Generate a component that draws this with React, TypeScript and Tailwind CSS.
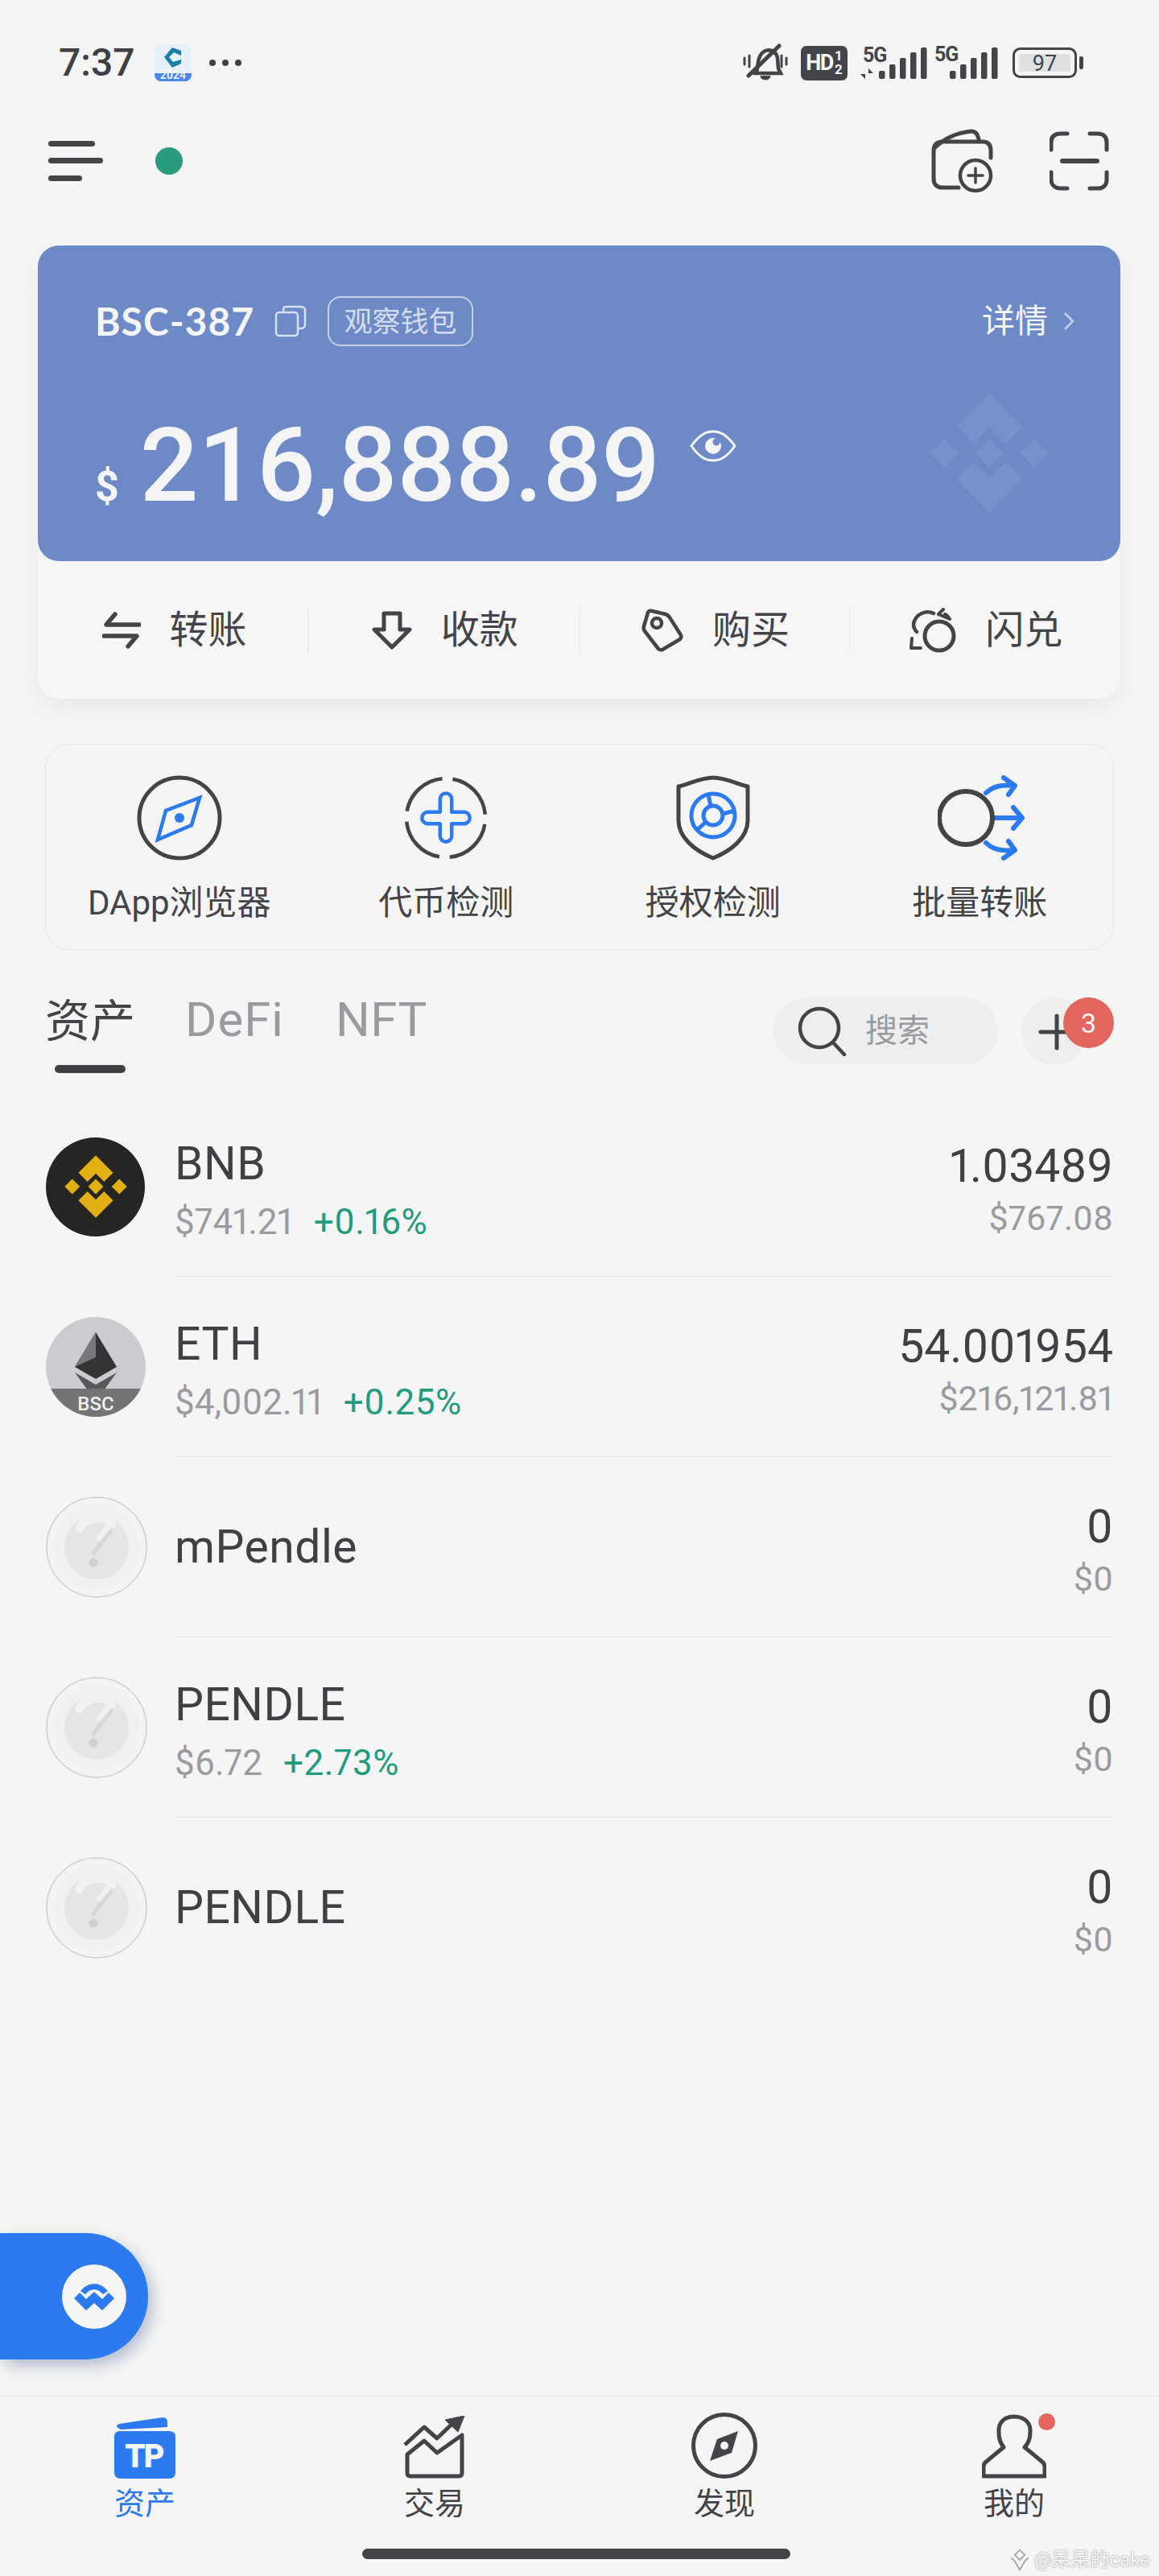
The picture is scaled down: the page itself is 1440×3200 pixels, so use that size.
import React from "react";

const DARK = "#434447";
const BLUE = "#2b7af0";

function Bn({ size, fill }: { size: number; fill: string }) {
  return (
    <svg width={size} height={size} viewBox="0 0 100 100">
      <g fill={fill}>
        <path d="M50 5 L75 30 L62 43 L50 31 L38 43 L25 30 Z" />
        <path d="M50 95 L75 70 L62 57 L50 69 L38 57 L25 70 Z" />
        <path d="M50 39 L61 50 L50 61 L39 50 Z" />
        <path d="M16 39 L27 50 L16 61 L5 50 Z" />
        <path d="M84 39 L95 50 L84 61 L73 50 Z" />
      </g>
    </svg>
  );
}

function SignalBars({ x0 }: { x0: number }) {
  const xs = [0, 13, 26, 39, 52];
  const hs = [10, 18, 26, 33, 39];
  return (
    <g fill={DARK}>
      {xs.map((x, i) => (
        <rect key={i} x={x0 + x} y={39 - hs[i] + 3} width="7.5" height={hs[i]} rx="2" />
      ))}
    </g>
  );
}

function StatusBar() {
  return (
    <div className="h-[156px] flex items-center justify-between pl-[73px] pr-[94px]">
      <div className="flex items-center">
        <span className="text-[48px] leading-none text-[#3f4043] font-['Roboto',sans-serif] font-medium w-[119px]">7:37</span>
        <svg width="46" height="46" viewBox="0 0 46 46">
          <rect width="46" height="46" rx="8" fill="#e6f0fa" />
          <path d="M0 36h46v2a8 8 0 0 1-8 8H8a8 8 0 0 1-8-8z" fill="#4b88ea" />
          <path d="M33 8 L22 4 L12 16 L22 29 L33 24 L33 19 L23 22 L18 16 L24 10 L33 14Z" fill="#1b7fa8" />
          <text x="23" y="43" textAnchor="middle" fontSize="14" fill="#fff" fontFamily="Roboto" fontWeight="500">2024</text>
        </svg>
        <div className="flex gap-[8px] ml-[22px]">
          <span className="w-[8px] h-[8px] rounded-full bg-[#3f4043]" />
          <span className="w-[8px] h-[8px] rounded-full bg-[#3f4043]" />
          <span className="w-[8px] h-[8px] rounded-full bg-[#3f4043]" />
        </div>
      </div>
      <div className="flex items-center">
        <svg width="56" height="48" viewBox="0 0 56 48" fill="none" stroke={DARK} strokeLinecap="round">
          <path d="M17 36 C19 30 17 14 28 9 C36 6 42 12 43 18 L44 31 L47 37 H14" strokeWidth="4.5" />
          <path d="M22 41 a6 4 0 0 0 12 0z" fill={DARK} strokeWidth="1" />
          <path d="M7 40 L45 3" strokeWidth="5" />
          <path d="M2 18v8M8 15v14M48 15v14M54 18v8" strokeWidth="3" />
        </svg>
        <div className="ml-[16px] w-[58px] h-[43px] rounded-[7px] bg-[#434447] flex items-center justify-center text-[#f5f5f5] font-['Roboto',sans-serif] font-bold leading-none">
          <span className="text-[27px] tracking-[-1.5px]">HD</span>
          <span className="flex flex-col text-[17px] leading-[17px] ml-[2px]">
            <span>1</span>
            <span>2</span>
          </span>
        </div>
        <svg width="172" height="44" viewBox="0 0 172 44" className="ml-[15px] overflow-visible">
          <text x="4" y="21" fontSize="25" fontWeight="700" fill={DARK} fontFamily="Roboto" letterSpacing="-1">5G</text>
          <path d="M7 29v13l-6-6h6M11 42V29l6 6h-6" fill={DARK} />
          <SignalBars x0={24} />
          <text x="93" y="20" fontSize="25" fontWeight="700" fill={DARK} fontFamily="Roboto" letterSpacing="-1">5G</text>
          <SignalBars x0={112} />
        </svg>
        <svg width="88" height="38" viewBox="0 0 88 38" className="ml-[18px]">
          <rect x="1.5" y="1.5" width="77" height="35" rx="8" fill="none" stroke={DARK} strokeWidth="3" />
          <rect x="8" y="8" width="64" height="22" rx="3" fill="#dfe0e2" />
          <text x="40" y="29" textAnchor="middle" fontSize="27" fill={DARK} fontFamily="Roboto">97</text>
          <rect x="83" y="11" width="5" height="16" rx="2" fill={DARK} />
        </svg>
      </div>
    </div>
  );
}

function Header() {
  return (
    <div className="h-[88px] mb-[61px] flex items-center justify-between pl-[60px] pr-[62px]">
      <div className="flex items-center">
        <svg width="68" height="50" viewBox="0 0 68 50" fill={DARK}>
          <rect x="0" y="0" width="58" height="7" rx="3.5" />
          <rect x="0" y="21" width="68" height="7" rx="3.5" />
          <rect x="0" y="43" width="42" height="7" rx="3.5" />
        </svg>
        <span className="ml-[65px] w-[34px] h-[34px] rounded-full bg-[#2a9c7e]" />
      </div>
      <div className="flex items-center">
        <svg width="80" height="80" viewBox="0 0 80 80" fill="none" stroke={DARK} strokeWidth="5" strokeLinecap="round">
          <path d="M4 24 C14 14 30 5 50 3 C56 3 58 8 59 13" />
          <path d="M34 73 H14 C7 73 3 69 3 62 V27 C3 20 7 16 14 16 H64 C71 16 74 20 74 27 V36" />
          <circle cx="55" cy="58" r="19" strokeWidth="4.5" />
          <path d="M55 49v18M46 58h18" strokeWidth="3.5" />
        </svg>
        <svg width="74" height="74" viewBox="0 0 74 74" fill="none" stroke={DARK} strokeWidth="5" strokeLinecap="round" className="ml-[67px]">
          <path d="M2 23 V14 C2 6 7 3 14 3 H22" />
          <path d="M50 3 H60 C67 3 71 7 71 14 V23" />
          <path d="M2 51 V60 C2 67 7 71 14 71 H22" />
          <path d="M50 71 H60 C67 71 71 67 71 60 V51" />
          <path d="M16 37 H59" strokeWidth="6" />
        </svg>
      </div>
    </div>
  );
}

function ActionIcon({ kind }: { kind: string }) {
  if (kind === "transfer")
    return (
      <svg width="48" height="46" viewBox="0 0 48 46" fill="none" stroke={DARK} strokeLinecap="round" strokeLinejoin="round">
        <path d="M16 3 L5 16 H46" strokeWidth="5.5" />
        <path d="M32 43 L43 30 H2" strokeWidth="5.5" />
      </svg>
    );
  if (kind === "receive")
    return (
      <svg width="50" height="48" viewBox="0 0 50 48" fill="none" stroke={DARK} strokeWidth="5" strokeLinecap="round" strokeLinejoin="round">
        <path d="M15 3 H35 V23 H47 L25 45 L3 23 H15 Z" />
      </svg>
    );
  if (kind === "buy")
    return (
      <svg width="52" height="54" viewBox="0 0 52 54" fill="none" stroke={DARK} strokeWidth="4.5" strokeLinecap="round" strokeLinejoin="round">
        <path d="M3 22 L8 5 Q9 2 13 3 L30 7 Q33 8 35 11 L49 33 Q50 36 48 38 L26 51 Q23 52 21 50 L4 28 Q2 25 3 22 Z" />
        <circle cx="19" cy="18" r="6" />
      </svg>
    );
  return (
    <svg width="58" height="56" viewBox="0 0 58 56" fill="none" stroke={DARK} strokeWidth="4.5" strokeLinecap="round" strokeLinejoin="round">
      <circle cx="37" cy="35" r="18" strokeWidth="5" />
      <path d="M30 7 C22 3 8 6 5 20 C5 25 8 29 9 30" />
      <path d="M42 2 L36 8 L50 14 C49 12 47 9 44 8" strokeWidth="4" />
      <path d="M2 50 H14 M3 38 L2 50" strokeWidth="4" />
    </svg>
  );
}

function Action({ kind, label }: { kind: string; label: string }) {
  return (
    <div className="flex items-center justify-center gap-[36px] pl-[3px]">
      <ActionIcon kind={kind} />
      <span className="text-[48px] leading-none text-[#434447]">{label}</span>
    </div>
  );
}

function WalletCard() {
  return (
    <div className="mx-[47px] w-[1345px] h-[563px] rounded-[26px] bg-[#f6f6f6] shadow-[0_14px_30px_rgba(0,0,0,0.05)] flex flex-col">
      <div className="relative h-[392px] rounded-[26px] bg-[#6d8ac6] pl-[71px] pr-[57px] pt-[63px] overflow-hidden">
        <div className="flex items-center justify-between h-[62px]">
          <div className="flex items-center">
            <span className="text-[48px] leading-none font-bold text-[#f5f5f5] font-['Lato',sans-serif] tracking-[1px] w-[223px]">BSC-387</span>
            <svg width="40" height="40" viewBox="0 0 40 40" fill="none" stroke="#d9e1f0" strokeWidth="2.5">
              <rect x="2" y="9" width="27" height="29" rx="4" />
              <path d="M11 8 V6 C11 3 13 2 15 2 H33 C36 2 38 4 38 6 V24 C38 27 36 29 33 29 H30" />
            </svg>
            <div className="ml-[26px] h-[62px] w-[181px] rounded-[16px] border-2 border-[#c5d1e8] flex items-center justify-center pt-[3px] text-[35px] leading-none text-[#d3ddee]">
              观察钱包
            </div>
          </div>
          <div className="flex items-center text-[41px] leading-none text-[#f5f5f5]">
            详情
            <svg width="14" height="24" viewBox="0 0 14 24" fill="none" stroke="#c5d1e8" strokeWidth="2.5" className="ml-[19px]">
              <path d="M2 2 L12 12 L2 22" />
            </svg>
          </div>
        </div>
        <div className="flex items-baseline mt-[88px] text-[#f5f5f5] font-['Roboto',sans-serif] font-medium">
          <span className="text-[52px] leading-none font-bold">$</span>
          <span className="ml-[26px] text-[128px] leading-[120px]">216,888.89</span>
          <svg width="58" height="40" viewBox="0 0 58 40" fill="none" stroke="#f5f5f5" strokeWidth="3" className="self-start ml-[37px] mt-[16px]">
            <path d="M2 20 C12 6 20 2 29 2 C38 2 46 6 56 20 C46 34 38 38 29 38 C20 38 12 34 2 20 Z" />
            <circle cx="29" cy="20" r="10" fill="#f5f5f5" stroke="none" />
            <circle cx="33" cy="15" r="4.5" fill="#6d8ac6" stroke="none" />
          </svg>
        </div>
        <div className="absolute left-[1100px] top-[175px]">
          <Bn size={165} fill="#7592cc" />
        </div>
      </div>
      <div className="flex-1 grid grid-cols-4 items-center">
        <div className="relative"><Action kind="transfer" label="转账" /><span className="absolute right-[-1px] top-[-2px] h-[56px] w-[2px] bg-[#ececec]" /></div>
        <div className="relative"><Action kind="receive" label="收款" /><span className="absolute right-[-1px] top-[-2px] h-[56px] w-[2px] bg-[#ececec]" /></div>
        <div className="relative"><Action kind="buy" label="购买" /><span className="absolute right-[-1px] top-[-2px] h-[56px] w-[2px] bg-[#ececec]" /></div>
        <div><Action kind="swap" label="闪兑" /></div>
      </div>
    </div>
  );
}

function FeatureIcon({ kind }: { kind: string }) {
  if (kind === "dapp")
    return (
      <svg width="106" height="106" viewBox="0 0 106 106" fill="none">
        <circle cx="53" cy="53" r="50" stroke={DARK} strokeWidth="5" />
        <path d="M78 28 L68 62 L26 80 L36 44 Z" stroke={BLUE} strokeWidth="4.5" strokeLinejoin="miter" />
        <circle cx="53" cy="53" r="6" fill={BLUE} />
      </svg>
    );
  if (kind === "token")
    return (
      <svg width="106" height="106" viewBox="0 0 106 106" fill="none">
        <circle cx="53" cy="53" r="49" stroke={DARK} strokeWidth="4.5" strokeDasharray="64 13" strokeDashoffset="-8" />
        <path d="M45 27 a8 8 0 0 1 16 0 V45 H78 a8 8 0 0 1 0 16 H61 V78 a8 8 0 0 1 -16 0 V61 H28 a8 8 0 0 1 0 -16 H45 Z" stroke={BLUE} strokeWidth="5" strokeLinejoin="round" transform="translate(53 53) scale(0.9) translate(-53 -53)" />
      </svg>
    );
  if (kind === "auth")
    return (
      <svg width="92" height="106" viewBox="0 0 92 106" fill="none">
        <path d="M3 14 C18 10 32 3 46 3 C60 3 74 10 89 14 V56 C89 78 68 94 46 103 C24 94 3 78 3 56 Z" stroke={DARK} strokeWidth="5" strokeLinejoin="round" />
        <circle cx="46" cy="50" r="27" stroke={BLUE} strokeWidth="5" />
        <circle cx="46" cy="50" r="12" stroke={BLUE} strokeWidth="5" />
        <path d="M40 24 L43 38M58 48 L73 44M37 58 L26 68" stroke={BLUE} strokeWidth="5" />
      </svg>
    );
  return (
    <svg width="110" height="106" viewBox="0 0 110 106" fill="none" strokeLinecap="round" strokeLinejoin="round" className="ml-[6px]">
      <path d="M60 22 C68 14 78 11 94 13M82 3 L96 13 L88 24" stroke={BLUE} strokeWidth="6" />
      <path d="M68 53 H104M94 40 L105 53 L94 66" stroke={BLUE} strokeWidth="6" />
      <path d="M60 84 C68 92 78 95 94 93M82 103 L96 93 L88 82" stroke={BLUE} strokeWidth="6" />
      <circle cx="35" cy="53" r="33" stroke={DARK} strokeWidth="6" fill="#f5f5f5" />
    </svg>
  );
}

function Feature({ kind, label }: { kind: string; label: string }) {
  return (
    <div className="flex flex-col items-center">
      <div className="h-[106px] flex items-center"><FeatureIcon kind={kind} /></div>
      <span className="mt-[26px] text-[42px] leading-[54px] text-[#434447]">{label}</span>
    </div>
  );
}

function Features() {
  return (
    <div className="mt-[56px] mx-[56px] h-[256px] rounded-[30px] border border-[#e4e6ea] grid grid-cols-4 pt-[38px]">
      <Feature kind="dapp" label="DApp浏览器" />
      <Feature kind="token" label="代币检测" />
      <Feature kind="auth" label="授权检测" />
      <Feature kind="batch" label="批量转账" />
    </div>
  );
}

function Tabs() {
  return (
    <div className="mt-[59px] h-[94px] pl-[60px] pr-[56px] flex items-start justify-between">
      <div className="flex items-start">
        <div className="flex flex-col items-center w-[104px]">
          <span className="text-[56px] leading-[56px] text-[#434447] whitespace-nowrap mt-[2px]">资产</span>
          <span className="mt-[26px] w-[88px] h-[10px] rounded-full bg-[#3f4043]" />
        </div>
        <span className="ml-[66px] text-[60px] leading-[56px] tracking-[1px] text-[#9a9ba0] font-['Roboto',sans-serif]">DeFi</span>
        <span className="ml-[64px] text-[60px] leading-[56px] tracking-[0.5px] text-[#9a9ba0] font-['Roboto',sans-serif]">NFT</span>
      </div>
      <div className="flex items-start">
        <div className="w-[279px] h-[84px] rounded-full bg-[#eeeeee] flex items-center pl-[30px]">
          <svg width="62" height="62" viewBox="0 0 62 62" fill="none" stroke={DARK} strokeWidth="4.5" strokeLinecap="round">
            <circle cx="27" cy="27" r="24" />
            <path d="M44 45 L58 60" />
          </svg>
          <span className="ml-[22px] text-[40px] leading-none text-[#9a9ba0]">搜索</span>
        </div>
        <div className="relative ml-[30px] w-[114px] h-[84px]">
          <div className="w-[80px] h-[84px] rounded-full bg-[#eeeeee]" />
          <svg width="60" height="46" viewBox="0 0 60 46" className="absolute left-[20px] top-[20px]" fill="none" stroke={DARK} strokeWidth="5" strokeLinecap="round">
            <path d="M3 23 H40 M23 3 V43" />
          </svg>
          <span className="absolute right-0 top-0 w-[63px] h-[63px] rounded-full bg-[#e2655e] flex items-center justify-center text-[#f5f5f5] text-[34px] leading-none font-['Roboto',sans-serif]">3</span>
        </div>
      </div>
    </div>
  );
}

function BnbIcon() {
  return (
    <div className="w-[123px] h-[123px] rounded-full bg-[#262523] flex items-center justify-center">
      <Bn size={86} fill="#e2b013" />
    </div>
  );
}

function EthIcon() {
  return (
    <svg width="124" height="124" viewBox="0 0 124 124">
      <defs>
        <clipPath id="eth-clip"><circle cx="62" cy="62" r="62" /></clipPath>
      </defs>
      <circle cx="62" cy="62" r="62" fill="#cbcccf" />
      <path d="M62 19 L36 62 L62 77 L88 62 Z" fill="#333335" />
      <path d="M62 19 L36 62 L62 50 Z" fill="#77787b" />
      <path d="M36 69 L62 105 L88 69 L62 84 Z" fill="#59595c" />
      <g clipPath="url(#eth-clip)">
        <rect x="0" y="89" width="124" height="35" fill="#737476" />
      </g>
      <text x="62" y="116" textAnchor="middle" fontSize="24" fill="#f0f0f0" fontFamily="Roboto" fontWeight="500">BSC</text>
    </svg>
  );
}

function UnknownIcon() {
  return (
    <svg width="126" height="126" viewBox="0 0 126 126" fill="none">
      <circle cx="63" cy="63" r="62" stroke="#cfcfd0" strokeWidth="1.5" fill="#f3f3f3" />
      <circle cx="63" cy="63" r="53" fill="#f0f0f1" />
      <circle cx="63" cy="63" r="40" fill="#e5e5e7" />
      <path d="M42 40 C48 26 70 20 82 34" stroke="#f1f1f2" strokeWidth="11" strokeLinecap="round" />
      <path d="M80 42 L60 70" stroke="#d7d7d9" strokeWidth="6" strokeLinecap="round" />
      <path d="M84 30 L66 52" stroke="#f1f1f2" strokeWidth="7" strokeLinecap="round" />
      <circle cx="59" cy="82" r="5.5" fill="#d0d0d2" />
    </svg>
  );
}

type Row = { icon: React.ReactNode; name: string; price?: string; change?: string; amount: string; value: string; last?: boolean };

function TokenRow({ icon, name, price, change, amount, value, last }: Row) {
  return (
    <div className="h-[224px] flex items-center pl-[57px] pr-[56px] [font-variant-numeric:proportional-nums]">
      <div className="w-[160px] shrink-0">{icon}</div>
      <div className={`flex-1 h-full flex items-center justify-between ${last ? "" : "border-b border-[#e6e6e6]"}`}>
        <div className={price ? "pt-[16px]" : ""}>
          <div className="text-[57px] leading-[60px] tracking-[0.5px] text-[#3f4043]">{name}</div>
          {price ? (
            <div className="mt-[12px] flex text-[44px] leading-[60px]">
              <span className="text-[#9a9ba0]">{price}</span>
              <span className="ml-[26px] tracking-[0.5px] text-[#1f9c7d]">{change}</span>
            </div>
          ) : null}
        </div>
        <div className="pt-[14px] flex flex-col items-end pr-[1px]">
          <div className="text-[57px] leading-[65px] text-[#3f4043]">{amount}</div>
          <div className="text-[43px] leading-[65px] text-[#9a9ba0]">{value}</div>
        </div>
      </div>
    </div>
  );
}

function NavItem({ label, active, icon }: { label: string; active?: boolean; icon: React.ReactNode }) {
  return (
    <div className="flex flex-col items-center w-[80px]">
      <div className="h-[82px] flex items-end">{icon}</div>
      <span className={`mt-[9px] text-[38px] leading-[44px] whitespace-nowrap ${active ? "text-[#2b7af0]" : "text-[#434447]"}`}>{label}</span>
    </div>
  );
}

function BottomNav() {
  return (
    <div className="absolute left-0 right-0 top-[2976px] h-[224px] border-t border-[#e2e2e2] pt-[20px] pl-[140px] pr-[140px] flex justify-between">
      <NavItem
        label="资产"
        active
        icon={
          <svg width="76" height="76" viewBox="0 0 76 76">
            <path d="M3 12 Q3 9 6 8 L60 0 Q66 0 66 6 V12 L8 15 Z" fill={BLUE} />
            <path d="M0 24 Q0 17 7 17 H68 Q76 17 76 24 V68 Q76 76 68 76 H8 Q0 76 0 68 Z" fill={BLUE} />
            <text x="37" y="62" textAnchor="middle" fontSize="40" fontWeight="900" letterSpacing="-2" fill="#f5f5f5" fontFamily="Roboto">TP</text>
          </svg>
        }
      />
      <NavItem
        label="交易"
        icon={
          <svg width="78" height="78" viewBox="0 0 78 78" fill="none" stroke={DARK} strokeLinejoin="round">
            <path d="M2 36 L26 14 L42 28 L68 3" strokeWidth="5" />
            <path d="M52 5 L76 0 L68 20 Z" fill={DARK} strokeWidth="1" />
            <path d="M5 48 L26 31 L42 46 L73 24 V71 Q73 75 69 75 H9 Q5 75 5 71 Z" strokeWidth="5" />
          </svg>
        }
      />
      <NavItem
        label="发现"
        icon={
          <svg width="82" height="82" viewBox="0 0 82 82" fill="none">
            <circle cx="41" cy="41" r="38.5" stroke={DARK} strokeWidth="5" />
            <path d="M58 23 L50 50 L23 60 L32 33 Z" fill={DARK} />
            <circle cx="41" cy="41" r="5" fill="#f5f5f5" />
          </svg>
        }
      />
      <div className="relative">
        <NavItem
          label="我的"
          icon={
            <svg width="80" height="80" viewBox="0 0 80 80" fill="none" stroke={DARK} strokeWidth="5" strokeLinejoin="round">
              <path d="M27 41 C21 34 21 26 21 20 C21 9 29 3 40 3 C51 3 60 9 60 20 C60 26 60 34 53 41 L76 60 Q78 62 78 66 V77 H2 V66 Q2 62 4 60 Z" />
            </svg>
          }
        />
        <span className="absolute left-[70px] top-[1px] w-[21px] h-[21px] rounded-full bg-[#e2655e]" />
      </div>
    </div>
  );
}

export default function App() {
  return (
    <div className="relative w-[1440px] h-[3200px] overflow-hidden bg-[#f5f5f5] font-['Roboto','Noto_Sans_CJK_SC',sans-serif]">
      <StatusBar />
      <Header />
      <WalletCard />
      <Features />
      <Tabs />
      <div className="mt-[29px]">
        <TokenRow icon={<BnbIcon />} name="BNB" price="$741.21" change="+0.16%" amount="1.03489" value="$767.08" />
        <TokenRow icon={<EthIcon />} name="ETH" price="$4,002.11" change="+0.25%" amount="54.001954" value="$216,121.81" />
        <TokenRow icon={<UnknownIcon />} name="mPendle" amount="0" value="$0" />
        <TokenRow icon={<UnknownIcon />} name="PENDLE" price="$6.72" change="+2.73%" amount="0" value="$0" />
        <TokenRow icon={<UnknownIcon />} name="PENDLE" amount="0" value="$0" last />
      </div>
      <div className="absolute left-0 top-[2774px] w-[184px] h-[157px] rounded-r-[78px] bg-[#2b7af0] shadow-[6px_8px_18px_rgba(60,90,140,0.35)] flex items-center justify-end pr-[27px]">
        <div className="w-[80px] h-[80px] rounded-full bg-[#f5f5f5] flex items-center justify-center">
          <svg width="50" height="36" viewBox="0 0 50 36" fill={BLUE}>
            <path d="M8 11 C18 -1 32 -1 42 11 L36 15 C29 7 21 7 14 15 Z" />
            <path d="M0 20 L7 13 L15 21 L25 12 L35 21 L43 13 L50 20 L35 35 L25 26 L15 35 Z" />
          </svg>
        </div>
      </div>
      <BottomNav />
      <div className="absolute left-0 w-full top-[3166px] h-[13px] flex justify-center pr-[8px]">
        <div className="w-[532px] h-[13px] rounded-full bg-[#434447]" />
      </div>
      <div className="absolute left-[1253px] top-[3166px] flex items-center text-[24px] leading-none text-[#f7f7f7] whitespace-nowrap [text-shadow:0_0_2px_#777777]">
        <svg width="28" height="28" viewBox="0 0 100 100" fill="none" stroke="#a9a9a9" strokeWidth="7" className="mr-[4px]">
          <path d="M50 6 L72 28 L50 50 L28 28 Z M12 40 L28 56 L50 94 L72 56 L88 40" />
        </svg>
        @呆呆的cake
      </div>
    </div>
  );
}
